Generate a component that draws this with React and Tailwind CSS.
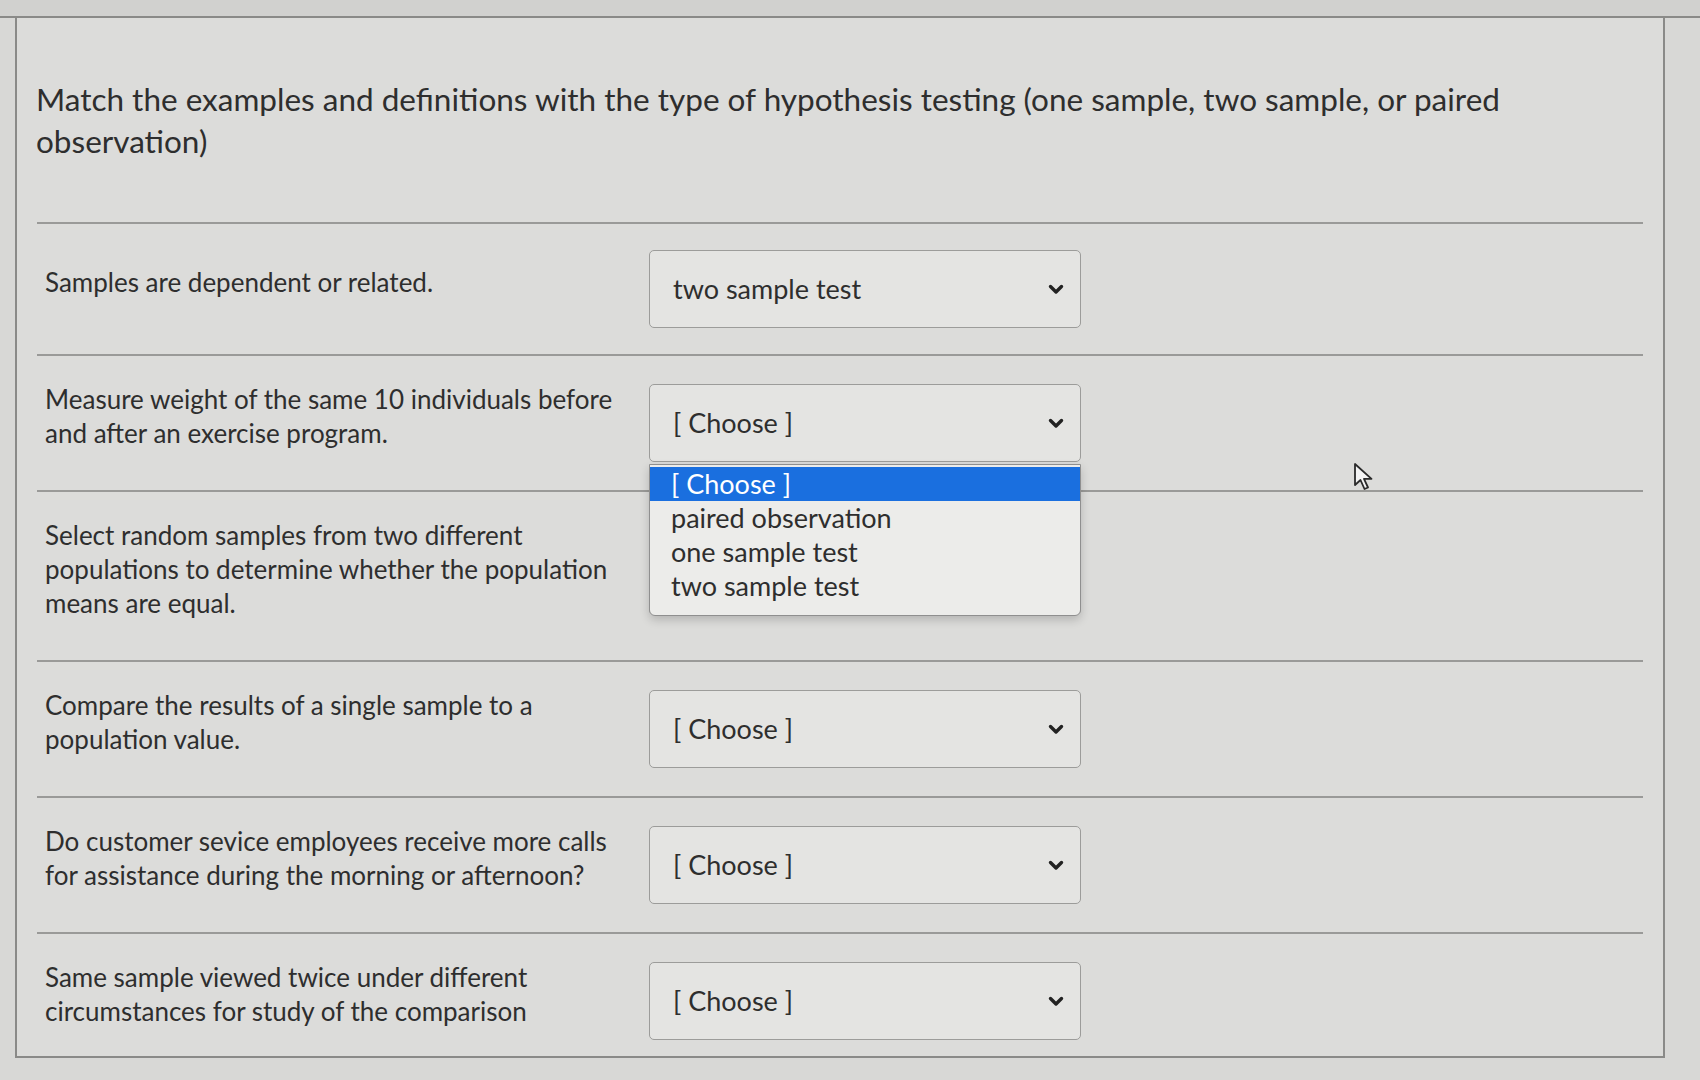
const OPTIONS = ['[ Choose ]', 'paired observation', 'one sample test', 'two sample test'];

const QUESTIONS = [
    { prompt: 'Samples are dependent or related.', value: 'two sample test' },
    { prompt: 'Measure weight of the same 10 individuals before and after an exercise program.', value: '[ Choose ]', open: true },
    { prompt: 'Select random samples from two different populations to determine whether the population means are equal.', value: '[ Choose ]' },
    { prompt: 'Compare the results of a single sample to a population value.', value: '[ Choose ]' },
    { prompt: 'Do customer sevice employees receive more calls for assistance during the morning or afternoon?', value: '[ Choose ]' },
    { prompt: 'Same sample viewed twice under different circumstances for study of the comparison', value: '[ Choose ]' },
];

// Flecha del select, trazo grueso como en el navegador
function Chevron() {
    return (
        <svg width="16" height="11" viewBox="0 0 16 11" className="shrink-0">
            <path d="M2.5 2.5 L8 8 L13.5 2.5" fill="none" stroke="#222" strokeWidth="3.4" strokeLinecap="round" strokeLinejoin="round" />
        </svg>
    );
}

// Lista de opciones desplegada bajo el select activo
function OptionList({ selected }) {
    return (
        <div className="absolute left-0 right-0 top-[calc(100%+2px)] z-10 bg-[#ececea] border border-[#8f8f8f] rounded-b-[6px] pt-[2px] pb-[12px] shadow-[0_4px_10px_rgba(0,0,0,0.18)]">
            {OPTIONS.map(opt => (
                <div
                    key={opt}
                    className={`px-[21px] h-[34px] leading-[34px] text-[27px] ${opt === selected ? 'bg-[#1a6fdf] text-white' : 'text-[#2e2e2e]'}`}
                >
                    {opt}
                </div>
            ))}
        </div>
    );
}

function AnswerSelect({ value, open }) {
    return (
        <div className="relative w-[432px] shrink-0">
            <div className="h-[78px] flex items-center justify-between pl-[23px] pr-[16px] bg-[#e4e4e2] border border-[#9c9c9a] rounded-[5px]">
                <span className="text-[27px] text-[#2e2e2e]">{value}</span>
                <Chevron />
            </div>
            {open && <OptionList selected={value} />}
        </div>
    );
}

function QuestionRow({ prompt, value, open }) {
    return (
        <div className="flex items-center gap-[24px] py-[26px] pl-[8px] border-t-2 border-[#9a9a98]">
            <p className="w-[580px] shrink-0 pb-[14px] text-[26px] leading-[34px] text-[#2e2e2e]">{prompt}</p>
            <AnswerSelect value={value} open={open} />
        </div>
    );
}

// Puntero del ratón sobre la pregunta
function Pointer() {
    return (
        <svg className="absolute left-[1353px] top-[462px] z-20" width="22" height="30" viewBox="0 0 22 30">
            <path d="M2 2 L2 23 L7.5 18 L11.5 27 L15 25.5 L11 16.8 L18.5 16.8 Z" fill="#f4f4f4" stroke="#2a2a2a" strokeWidth="1.8" strokeLinejoin="round" />
        </svg>
    );
}

export default function App() {
    return (
        <div className="relative h-[1080px] w-full overflow-hidden bg-[#d8d8d6]" style={{ fontFamily: 'Lato, "Open Sans", sans-serif' }}>
            <div className="h-[16px] bg-[#d1d1cf]" />
            <div className="border-t-2 border-[#8a8a88]">
                <div className="ml-[15px] mr-[35px] h-[1040px] bg-[#dcdcda] border-l-2 border-r-2 border-b-2 border-[#8a8a88]">
                    <div className="pl-[19px] pr-[100px] pt-[60px] pb-[60px]">
                        <p className="text-[31.5px] leading-[42px] text-[#2e2e2e]">
                            Match the examples and definitions with the type of hypothesis testing (one sample, two sample, or paired observation)
                        </p>
                    </div>
                    <div className="mx-[20px]">
                        {QUESTIONS.map((q, i) => (
                            <QuestionRow key={i} {...q} />
                        ))}
                    </div>
                </div>
            </div>
            <Pointer />
        </div>
    );
}
